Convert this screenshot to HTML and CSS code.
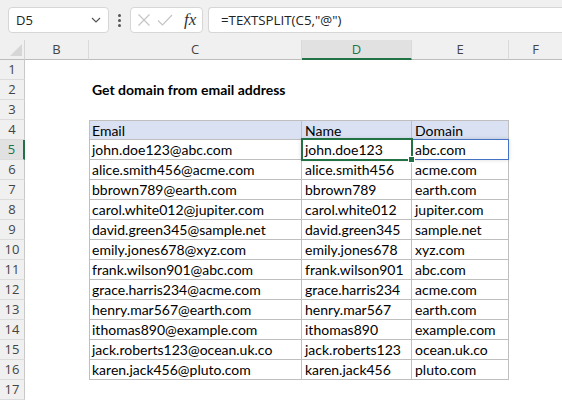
FILE: index.html
```html
<!DOCTYPE html>
<html>
<head>
<meta charset="utf-8">
<link rel="stylesheet" href="styles.css">
</head>
<body>
<div class="toolbar">
  <div class="namebox"><span>D5</span>
    <svg class="chev" width="10" height="6" viewBox="0 0 10 6"><path d="M1 1 L5 5 L9 1" fill="none" stroke="#555" stroke-width="1.2"/></svg>
  </div>
  <div class="vdots"><i></i><i></i><i></i></div>
  <div class="fxbox">
    <svg class="ico" width="14" height="14" viewBox="0 0 14 14"><path d="M1.5 1.5 L12.5 12.5 M12.5 1.5 L1.5 12.5" stroke="#c4c4c4" stroke-width="1.2" fill="none"/></svg>
    <svg class="ico" width="16" height="14" viewBox="0 0 16 14"><path d="M1 7.5 L5.5 12 L15 2" stroke="#c4c4c4" stroke-width="1.2" fill="none"/></svg>
    <span class="fx">fx</span>
  </div>
  <div class="formula">=TEXTSPLIT(C5,"@")</div>
</div>
<div class="sheet">
  <div class="corner"><svg width="25" height="19" viewBox="0 0 25 19"><polygon points="22,4 22,16 10,16" fill="#d6d6d6"/></svg></div>
  <div class="ch">B</div><div class="ch">C</div><div class="ch sel">D</div><div class="ch">E</div><div class="ch last">F</div>

  <div class="rh">1</div><div></div><div></div><div></div><div></div><div></div>
  <div class="rh">2</div><div></div><div class="c title">Get domain from email address</div><div></div><div></div><div></div>
  <div class="rh">3</div><div></div><div></div><div></div><div></div><div></div>
  <div class="rh">4</div><div></div><div class="c t th first">Email</div><div class="c t th">Name</div><div class="c t th">Domain</div><div></div>
  <div class="rh sel">5</div><div></div><div class="c t first">john.doe123@abc.com</div><div class="c t">john.doe123</div><div class="c t">abc.com</div><div></div>
  <div class="rh">6</div><div></div><div class="c t first">alice.smith456@acme.com</div><div class="c t">alice.smith456</div><div class="c t">acme.com</div><div></div>
  <div class="rh">7</div><div></div><div class="c t first">bbrown789@earth.com</div><div class="c t">bbrown789</div><div class="c t">earth.com</div><div></div>
  <div class="rh">8</div><div></div><div class="c t first">carol.white012@jupiter.com</div><div class="c t">carol.white012</div><div class="c t">jupiter.com</div><div></div>
  <div class="rh">9</div><div></div><div class="c t first">david.green345@sample.net</div><div class="c t">david.green345</div><div class="c t">sample.net</div><div></div>
  <div class="rh">10</div><div></div><div class="c t first">emily.jones678@xyz.com</div><div class="c t">emily.jones678</div><div class="c t">xyz.com</div><div></div>
  <div class="rh">11</div><div></div><div class="c t first">frank.wilson901@abc.com</div><div class="c t">frank.wilson901</div><div class="c t">abc.com</div><div></div>
  <div class="rh">12</div><div></div><div class="c t first">grace.harris234@acme.com</div><div class="c t">grace.harris234</div><div class="c t">acme.com</div><div></div>
  <div class="rh">13</div><div></div><div class="c t first">henry.mar567@earth.com</div><div class="c t">henry.mar567</div><div class="c t">earth.com</div><div></div>
  <div class="rh">14</div><div></div><div class="c t first">ithomas890@example.com</div><div class="c t">ithomas890</div><div class="c t">example.com</div><div></div>
  <div class="rh">15</div><div></div><div class="c t first">jack.roberts123@ocean.uk.co</div><div class="c t">jack.roberts123</div><div class="c t">ocean.uk.co</div><div></div>
  <div class="rh">16</div><div></div><div class="c t first">karen.jack456@pluto.com</div><div class="c t">karen.jack456</div><div class="c t">pluto.com</div><div></div>
  <div class="rh">17</div><div></div><div></div><div></div><div></div><div></div>

  <div class="spill"></div>
  <div class="active"><span class="handle"></span></div>
</div>
</body>
</html>
```
FILE: styles.css
```css
html, body {
  margin: 0;
  padding: 0;
}
body {
  width: 562px;
  height: 400px;
  overflow: hidden;
  background: #fff;
  font-family: Lato, "Liberation Sans", sans-serif;
}
.toolbar {
  height: 40px;
  background: #f0f0f0;
  display: flex;
  align-items: center;
  padding-left: 8px;
  box-sizing: border-box;
  font-family: "Open Sans", "Noto Sans", sans-serif;
}
.namebox {
  width: 101px;
  height: 26px;
  box-sizing: border-box;
  background: #fff;
  border: 1px solid #d6d6d6;
  border-radius: 4px;
  display: flex;
  align-items: center;
  justify-content: space-between;
  padding: 0 7px 0 7px;
  font-size: 13px;
  color: #222;
}
.vdots {
  width: 3px;
  margin: 0 9px;
  display: flex;
  flex-direction: column;
  gap: 2px;
}
.vdots i {
  display: block;
  width: 3px;
  height: 3px;
  border-radius: 50%;
  background: #555;
}
.fxbox {
  width: 73px;
  height: 26px;
  box-sizing: border-box;
  background: #fff;
  border: 1px solid #d6d6d6;
  border-radius: 4px;
  display: flex;
  align-items: center;
  padding-left: 6px;
  gap: 6px;
}
.fx {
  font-family: "Liberation Serif", serif;
  font-style: italic;
  font-size: 17px;
  color: #333;
  margin-left: 5px;
}
.formula {
  flex: 1;
  height: 26px;
  margin-left: 5px;
  box-sizing: border-box;
  background: #fff;
  border: 1px solid #d6d6d6;
  border-right: none;
  border-radius: 4px 0 0 4px;
  padding-left: 12px;
  font-size: 13.3px;
  line-height: 24px;
  color: #222;
}
.sheet {
  position: relative;
  display: grid;
  grid-template-columns: 25px 64px 213px 110px 97px 53px;
  grid-template-rows: repeat(18, 20px);
}
.corner {
  background: #f0f0f0;
  border-bottom: 1px solid #bdbdbd;
  border-right: 1px solid #d4d4d4;
  box-sizing: border-box;
}
.corner svg { display: block; }
.ch {
  background: #f0f0f0;
  border-bottom: 1px solid #bdbdbd;
  border-right: 1px solid #dadada;
  box-sizing: border-box;
  text-align: center;
  font-family: "Open Sans", "Noto Sans", sans-serif;
  font-size: 13px;
  line-height: 19px;
  color: #444;
}
.ch.last { border-right: none; }
.ch.sel {
  background: #e1e1e1;
  color: #217346;
  border-bottom: 2px solid #217346;
}
.rh {
  background: #f0f0f0;
  border-right: 1px solid #c8c8c8;
  border-bottom: 1px solid #dcdcdc;
  box-sizing: border-box;
  text-align: center;
  font-family: "Open Sans", "Noto Sans", sans-serif;
  font-size: 13px;
  line-height: 19px;
  color: #444;
}
.rh.sel {
  background: #e1e1e1;
  color: #217346;
  border-right: 2px solid #217346;
}
.c {
  box-sizing: border-box;
  padding-left: 3px;
  font-size: 14px;
  line-height: 20px;
  white-space: nowrap;
  color: #000;
}
.title {
  font-weight: bold;
  overflow: visible;
}
.t {
  border-right: 1px solid #bfbfbf;
  border-bottom: 1px solid #bfbfbf;
  line-height: 20px;
}
.t.first { border-left: 1px solid #bfbfbf; padding-left: 2px; }
.th {
  background: #d9e1f2;
  border-top: 1px solid #bfbfbf;
  line-height: 19px;
}
.spill {
  position: absolute;
  left: 301px;
  top: 99px;
  width: 208px;
  height: 21px;
  box-sizing: border-box;
  border: 1px solid #4472c4;
  box-shadow: 0 0 4px rgba(0, 0, 0, 0.15);
}
.active {
  position: absolute;
  left: 301px;
  top: 98px;
  width: 112px;
  height: 23px;
  box-sizing: border-box;
  border: 2px solid #217346;
}
.handle {
  position: absolute;
  right: -4px;
  bottom: -4px;
  width: 5px;
  height: 5px;
  background: #217346;
  border: 1px solid #fff;
}
```
